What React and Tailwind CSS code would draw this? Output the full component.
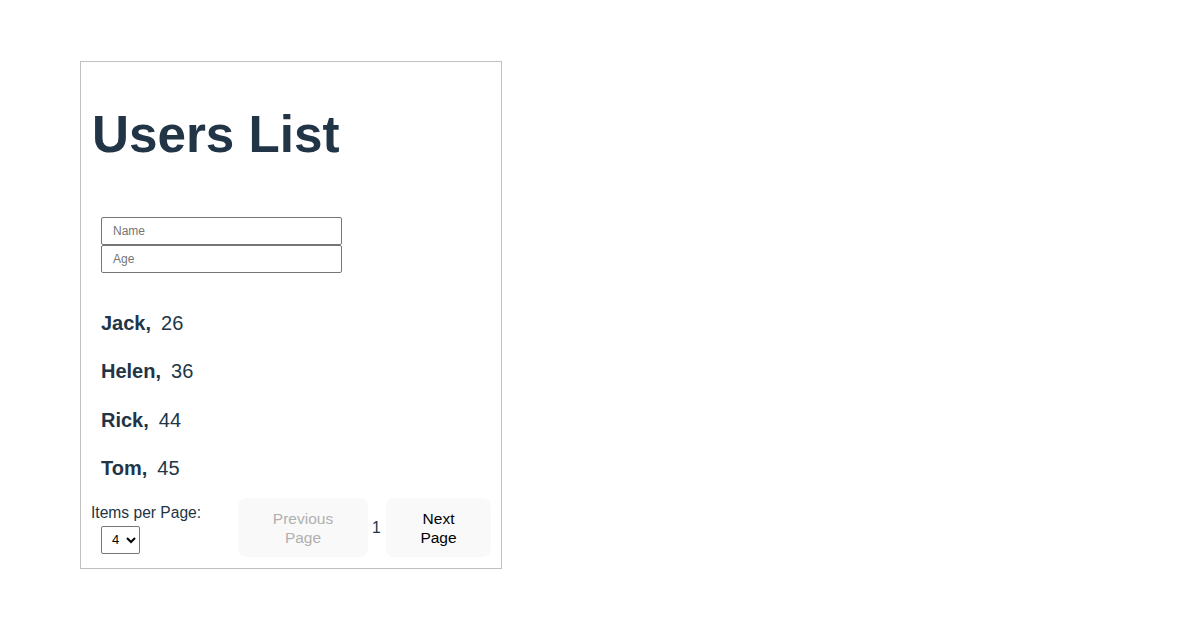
import React from "react";

const users = [
  { name: "Jack", age: 26 },
  { name: "Helen", age: 36 },
  { name: "Rick", age: 44 },
  { name: "Tom", age: 45 },
];

export default function App() {
  return (
    <div
      className="pt-[61px] pl-[80px] bg-white min-h-[630px] text-[#213547]"
      style={{ fontFamily: '"Liberation Sans", Arial, Helvetica, sans-serif' }}
    >
      <div className="w-[422px] h-[508px] border border-[#c0c0c0] flex flex-col">
        <h1 className="mt-[44.8px] ml-[11px] text-[51.2px] leading-[56.32px] font-bold">Users List</h1>
        <div className="mt-[53.9px] ml-[20px] flex flex-col">
          <input
            placeholder="Name"
            className="w-[241px] h-[28px] border border-[#767676] rounded-[2px] px-[11px] text-[12px] placeholder:text-[#757575] outline-none"
          />
          <input
            placeholder="Age"
            className="w-[241px] h-[28px] border border-[#767676] rounded-[2px] px-[11px] text-[12px] placeholder:text-[#757575] outline-none"
          />
        </div>
        <div className="mt-[26px] ml-[20px] flex flex-col">
          {users.map((u) => (
            <div key={u.name} className="h-[48.33px] leading-[48.33px] text-[20px]">
              <span className="font-bold">{u.name},</span>
              <span className="ml-[10px]">{u.age}</span>
            </div>
          ))}
        </div>
        <div className="mt-[5.7px] ml-[10px] flex flex-row items-start">
          <div className="w-[147px] flex flex-col">
            <span className="mt-[5.5px] text-[15.6px] leading-[18.4px]">Items per Page:</span>
            <select
              defaultValue="4"
              className="mt-[4px] ml-[10px] w-[39px] h-[28px] border border-[#767676] rounded-[2px] text-[13px] text-black bg-white pl-[6px]"
            >
              <option value="4">4</option>
              <option value="8">8</option>
              <option value="12">12</option>
            </select>
          </div>
          <button
            disabled
            className="w-[130px] h-[59px] rounded-[8px] bg-[#f9f9f9] text-[#b0b0b0] text-[15.5px] leading-[19px] text-center"
          >
            Previous
            <br />
            Page
          </button>
          <span className="w-[18px] h-[59px] flex items-center pl-[4px] text-[15.6px] text-[#213547]">1</span>
          <button className="w-[105px] h-[59px] rounded-[8px] bg-[#f9f9f9] text-black text-[15.5px] leading-[19px] text-center">
            Next
            <br />
            Page
          </button>
        </div>
      </div>
    </div>
  );
}
